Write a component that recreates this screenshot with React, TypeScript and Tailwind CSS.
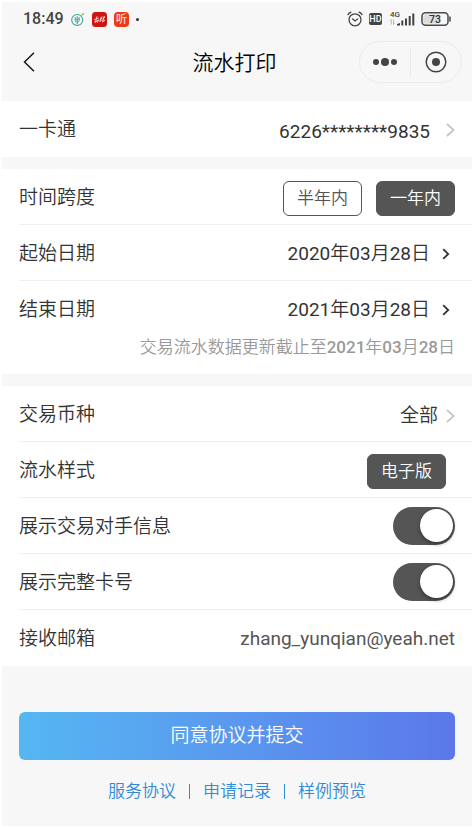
import { useState } from 'react'
import type { ReactNode } from 'react'

const links = ['服务协议', '申请记录', '样例预览']

function AlarmIcon() {
  return (
    <svg width="16" height="16" viewBox="0 0 16 16" fill="none" stroke="#444" strokeWidth="1.3" strokeLinecap="round" aria-hidden="true">
      <circle cx="8" cy="8.8" r="6" />
      <path d="M5.6 8 8 9.900l2.600-1.900M1 3.600Q2 2 3.900 1.200M15 3.600Q14 2 12.100 1.200" />
    </svg>
  )
}

function SignalIcon() {
  return (
    <svg width="26" height="18" viewBox="0 0 26 18" aria-hidden="true">
      <text x="1" y="7" fontSize="8" fontWeight="500" fontFamily="Roboto, sans-serif" fill="#444">4G</text>
      <path d="M2.200 14.500v-5l-1 1.200M4.600 9.500v5l1-1.200" fill="none" stroke="#aaa" strokeWidth=".8" />
      <path d="M8 15.500v-1.500l3-1v2.500zM12.300 15.500v-5h2v5zM16 15.500v-7h2v7zM19.700 15.500v-9.500h2v9.500zM23.300 15.500v-12h2v12z" fill="#444" />
    </svg>
  )
}

function BatteryIcon({ level }: { level: number }) {
  return (
    <svg width="31" height="14" viewBox="0 0 31 14" aria-hidden="true">
      <rect x="2.500" y="2.500" width={(level / 100) * 23} height="9" rx="1.500" fill="#dcdcdc" />
      <rect x="1" y=".8" width="26" height="12.400" rx="3.500" fill="none" stroke="#4a4a4a" strokeWidth="1.500" />
      <path d="M29 5v4" stroke="#4a4a4a" strokeWidth="1.500" strokeLinecap="round" />
      <text x="14" y="10.800" textAnchor="middle" fontSize="10.500" fontWeight="500" fontFamily="Roboto, sans-serif" fill="#333">{level}</text>
    </svg>
  )
}

function LeafCoinIcon() {
  return (
    <svg width="14" height="15" viewBox="0 0 14 15" fill="none" stroke="#3fa596" strokeLinecap="round" aria-hidden="true">
      <circle cx="6.200" cy="8" r="5.500" strokeWidth="1.100" />
      <path d="M6.200 4.500v7.500M4.200 5.500v3.200c0 .8.8 1.200 2 1.200M8.200 5.500v3.200c0 .8-.8 1.200-2 1.200M4.600 7.200h3.200" strokeWidth="1" />
      <path d="M10.500 3.500c0-1.500 1-2.500 2.500-2.500 0 1.600-.9 2.600-2.500 2.500z" fill="#9bdc6c" stroke="#9bdc6c" strokeWidth=".8" />
    </svg>
  )
}

function ScriptIcon() {
  return (
    <svg width="15" height="15" viewBox="0 0 15 15" aria-hidden="true">
      <rect width="15" height="15" rx="3.500" fill="#cf1512" />
      <path d="M2.500 7.500l3.800-1.500M4.800 4.800l-1.300 5.400M2.800 9.800l3-1.200M6.500 7.800l-1 2.600M8.800 5.800l-1 3.700 1.800-1.300M10 4.900l-.5 1.600M10.600 7l2-1.500M12.200 4.400l-1.700 5.600 2.300-1.700" fill="none" stroke="#fff" strokeWidth=".8" strokeLinecap="round" />
    </svg>
  )
}

function Chevron({ dark = false }: { dark?: boolean }) {
  return dark ? (
    <svg width="8" height="12" viewBox="0 0 8 12" fill="none" stroke="#333" strokeWidth="1.800" aria-hidden="true">
      <path d="M1.200 1.200 6.200 6l-5 4.800" />
    </svg>
  ) : (
    <svg width="9" height="14" viewBox="0 0 9 14" fill="none" stroke="#c4c4c4" strokeWidth="1.700" aria-hidden="true">
      <path d="M1 1l6.600 6L1 13" />
    </svg>
  )
}

function StatusBar() {
  return (
    <div className="flex h-[34px] items-center justify-between pl-[21px] pr-[20px]">
      <div className="flex items-center">
        <span className="w-12 text-base font-medium text-[#444]">18:49</span>
        <div className="flex items-center gap-[7px]">
          <LeafCoinIcon />
          <ScriptIcon />
          <span className="flex size-[15px] items-center justify-center rounded bg-[#ee3a17] text-[11px] leading-none text-white">听</span>
          <span className="size-[3px] rounded-full bg-[#333]" />
        </div>
      </div>
      <div className="flex items-center">
        <AlarmIcon />
        <span className="ml-[6px] flex h-3 w-[13px] items-center justify-center rounded-[2px] bg-[#444] text-[9px] font-medium leading-none text-white">HD</span>
        <span className="ml-[7px]"><SignalIcon /></span>
        <span className="ml-[6px]"><BatteryIcon level={73} /></span>
      </div>
    </div>
  )
}

function NavBar() {
  return (
    <div className="grid h-[52px] grid-cols-[1fr_auto_1fr] items-center pl-[5px] pr-[10px]">
      <button type="button" aria-label="返回" className="justify-self-start px-4 py-2">
        <svg width="12" height="20" viewBox="0 0 12 20" fill="none" stroke="#111" strokeWidth="1.400" aria-hidden="true">
          <path d="M11 .8 1.500 10l9.500 9.200" />
        </svg>
      </button>
      <h1 className="pt-[2px] text-[21px] font-normal text-black">流水打印</h1>
      <div className="flex h-[42px] w-[103px] items-center justify-self-end rounded-full border border-[#ececec]">
        <button type="button" aria-label="更多" className="flex h-full flex-1 items-center justify-center gap-[2px]">
          <span className="size-[6px] rounded-full bg-[#444]" />
          <span className="size-[8px] rounded-full bg-[#444]" />
          <span className="size-[6px] rounded-full bg-[#444]" />
        </button>
        <span className="h-[28px] w-px bg-[#e8e8e8]" />
        <button type="button" aria-label="关闭" className="flex h-full flex-1 items-center justify-center">
          <svg width="22" height="22" viewBox="0 0 22 22" aria-hidden="true">
            <circle cx="11" cy="11" r="9.800" fill="none" stroke="#444" strokeWidth="1.500" />
            <circle cx="11" cy="11" r="4" fill="#444" />
          </svg>
        </button>
      </div>
    </div>
  )
}

interface RowProps {
  label: string
  htmlFor?: string
  last?: boolean
  children: ReactNode
}

function Row({ label, htmlFor, last = false, children }: RowProps) {
  return (
    <div className={`ml-[17px] flex h-14 items-center justify-between pr-[17px] pt-[2px] ${last ? '' : 'border-b border-[#efefef]'}`}>
      <label htmlFor={htmlFor} className="shrink-0">{label}</label>
      {children}
    </div>
  )
}

interface ChipProps {
  active: boolean
  onClick?: () => void
  children: ReactNode
}

function Chip({ active, onClick, children }: ChipProps) {
  return (
    <button
      type="button"
      aria-pressed={active}
      onClick={onClick}
      className={`mt-[2px] h-[35px] w-[79px] rounded-md border border-[#555] text-[17px] leading-none ${active ? 'bg-[#555] text-white' : 'bg-white text-[#555]'}`}
    >
      {children}
    </button>
  )
}

function Toggle({ id }: { id: string }) {
  return (
    <input
      id={id}
      type="checkbox"
      role="switch"
      defaultChecked
      className="mb-[2px] flex h-[38px] w-[62px] appearance-none items-center rounded-full bg-[#ccc] px-[2px] before:size-[33px] before:rounded-full before:bg-white before:shadow-[0_2px_4px_rgba(0,0,0,0.4)] checked:justify-end checked:bg-[#555]"
    />
  )
}

export default function App() {
  const [span, setSpan] = useState('year')
  const [email, setEmail] = useState('zhang_yunqian@yeah.net')

  return (
    <div className="min-h-screen bg-white p-[2px] font-[Roboto,'Noto_Sans_CJK_SC_DemiLight','Noto_Sans_CJK_SC_Light','Noto_Sans_CJK_SC',sans-serif] text-[19px] leading-6 text-[#333]">
      <div className="bg-[#f7f7f7]">
        <header className="pb-[13px]">
          <StatusBar />
          <NavBar />
        </header>

        <main className="flex flex-col gap-3">
          <section className="bg-white">
            <Row label="一卡通" htmlFor="card" last>
              <button id="card" type="button" className="flex items-center gap-4 pt-1">
                6226********9835
                <span className="pb-1"><Chevron /></span>
              </button>
            </Row>
          </section>

          <section className="bg-white pb-[15px]">
            <Row label="时间跨度">
              <div className="flex gap-[14px]">
                <Chip active={span === 'half'} onClick={() => setSpan('half')}>半年内</Chip>
                <Chip active={span === 'year'} onClick={() => setSpan('year')}>一年内</Chip>
              </div>
            </Row>
            <Row label="起始日期" htmlFor="start">
              <button id="start" type="button" className="flex items-center gap-3 pr-[5px]">
                2020年03月28日
                <Chevron dark />
              </button>
            </Row>
            <Row label="结束日期" htmlFor="end" last>
              <button id="end" type="button" className="flex items-center gap-3 pr-[5px]">
                2021年03月28日
                <Chevron dark />
              </button>
            </Row>
            <p className="-mt-[2px] pr-[17px] text-right text-[17px] text-[#999]">
              交易流水数据更新截止至<span className="font-medium">2021</span>年<span className="font-medium">03</span>月<span className="font-medium">28</span>日
            </p>
          </section>

          <section className="bg-white">
            <Row label="交易币种" htmlFor="currency">
              <button id="currency" type="button" className="flex items-center gap-2 pt-[2px]">
                全部
                <Chevron />
              </button>
            </Row>
            <Row label="流水样式">
              <div className="pr-[9px]">
                <Chip active>电子版</Chip>
              </div>
            </Row>
            <Row label="展示交易对手信息" htmlFor="counterparty">
              <Toggle id="counterparty" />
            </Row>
            <Row label="展示完整卡号" htmlFor="full-card">
              <Toggle id="full-card" />
            </Row>
            <Row label="接收邮箱" htmlFor="email" last>
              <input
                id="email"
                type="email"
                value={email}
                onChange={(e) => setEmail(e.target.value)}
                className="min-w-0 flex-1 text-right text-[#555] outline-none"
              />
            </Row>
          </section>
        </main>

        <footer className="px-[17px] pb-[23px] pt-[46px]">
          <button type="button" className="h-12 w-full rounded-md bg-linear-to-r from-[#55b7f2] to-[#5b77ea] text-white">
            同意协议并提交
          </button>
          <nav className="mt-[19px] flex justify-center text-[17px] text-[#2f8bd8]">
            {links.map((text, i) => (
              <span key={text} className="flex items-center">
                {i > 0 && <span className="mx-[13px] h-[15px] w-px bg-[#2f8bd8]" />}
                <a href="#">{text}</a>
              </span>
            ))}
          </nav>
        </footer>
      </div>
    </div>
  )
}
